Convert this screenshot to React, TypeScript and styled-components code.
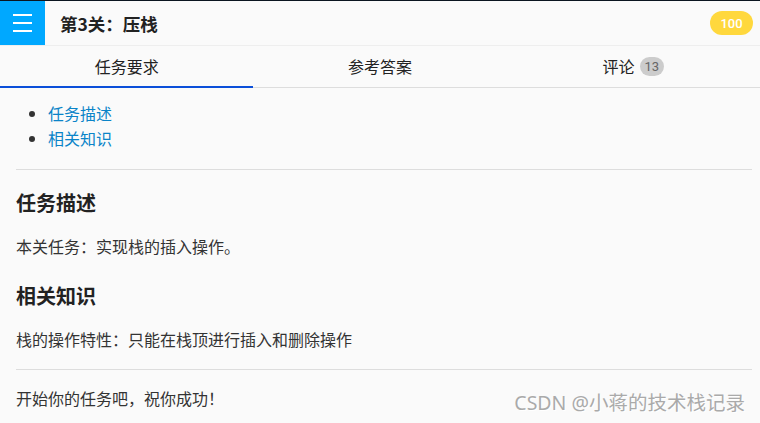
import React from 'react';
import styled, { createGlobalStyle } from 'styled-components';

const GlobalStyle = createGlobalStyle`
  html, body {
    margin: 0;
    padding: 0;
    background: #fafafa;
  }
  body {
    font-family: "Noto Sans", "Noto Sans CJK SC", sans-serif;
    color: #333;
  }
`;

const Page = styled.div`
  position: relative;
  width: 760px;
  height: 423px;
  overflow: hidden;
  background: #fafafa;
  border-top: 1px solid #0b1520;
  box-sizing: border-box;
`;

const TopBar = styled.header`
  display: flex;
  align-items: center;
  height: 44px;
  background: #fafafa;
  border-bottom: 1px solid #eeeeee;
`;

const MenuButton = styled.button`
  width: 45px;
  height: 44px;
  border: none;
  padding: 0;
  background: #00a8ff;
  display: flex;
  flex-direction: column;
  justify-content: center;
  align-items: center;
  gap: 6px;
`;

const MenuLine = styled.span`
  display: block;
  width: 19px;
  height: 2px;
  background: #fff;
`;

const Title = styled.h1`
  flex: 1;
  margin: 0 0 0 15px;
  font-size: 17.5px;
  font-weight: 700;
  color: #222;
  font-family: "Noto Sans CJK SC", sans-serif;
`;

const Score = styled.span`
  margin-right: 7px;
  min-width: 43px;
  height: 24px;
  padding: 0 2px;
  box-sizing: border-box;
  border-radius: 12px;
  background: #ffd83d;
  color: #fff;
  font-family: "Roboto", sans-serif;
  font-size: 13px;
  font-weight: 500;
  display: flex;
  align-items: center;
  justify-content: center;
`;

const Tabs = styled.nav`
  display: grid;
  grid-template-columns: repeat(3, 1fr);
  height: 41px;
  border-bottom: 1px solid #dddddd;
`;

const Tab = styled.div<{ $active?: boolean }>`
  display: flex;
  align-items: center;
  justify-content: center;
  gap: 5px;
  font-size: 16px;
  color: #222;
  font-family: "Noto Sans CJK SC", sans-serif;
  border-bottom: 2px solid ${p => (p.$active ? '#0b4fd9' : 'transparent')};
  margin-bottom: -1px;
`;

const Count = styled.span`
  display: inline-flex;
  align-items: center;
  justify-content: center;
  height: 19px;
  padding: 0 5px;
  border-radius: 10px;
  background: #cccccc;
  color: #666;
  font-size: 13px;
  font-family: "Roboto", sans-serif;
`;

const Content = styled.main`
  padding: 0 8px 0 16px;
  font-family: "Noto Sans CJK SC", sans-serif;
  font-size: 16px;
  color: #333;
`;

const Toc = styled.ul`
  margin: 13px 0 0;
  padding-left: 32px;
  line-height: 25px;
`;

const TocLink = styled.a`
  color: #0a84c8;
  text-decoration: none;
`;

const Rule = styled.hr<{ $top: number }>`
  border: none;
  border-top: 1px solid #dddddd;
  margin: ${p => p.$top}px 0 0;
`;

const Heading = styled.h3`
  margin: 0;
  font-size: 20px;
  font-weight: 700;
  color: #222;
  line-height: 26px;
`;

const Para = styled.p`
  margin: 0;
  line-height: 22px;
`;

const Section = styled.section<{ $top: number }>`
  padding-top: ${p => p.$top}px;
  display: flex;
  flex-direction: column;
  gap: 19px;
`;

const Watermark = styled.div`
  position: absolute;
  right: 15px;
  bottom: 7px;
  font-size: 19.5px;
  color: #aaa;
  font-family: "Noto Sans", "Noto Sans CJK SC", sans-serif;
  text-shadow: 1px 1px 0 #fff;
`;

const App: React.FC = () => (
  <>
    <GlobalStyle />
    <Page>
      <TopBar>
        <MenuButton aria-label="menu">
          <MenuLine />
          <MenuLine />
          <MenuLine />
        </MenuButton>
        <Title>第3关：压栈</Title>
        <Score>100</Score>
      </TopBar>
      <Tabs>
        <Tab $active>任务要求</Tab>
        <Tab>参考答案</Tab>
        <Tab>
          评论<Count>13</Count>
        </Tab>
      </Tabs>
      <Content>
        <Toc>
          <li><TocLink href="#d">任务描述</TocLink></li>
          <li><TocLink href="#k">相关知识</TocLink></li>
        </Toc>
        <Rule $top={18} />
        <Section $top={20}>
          <Heading>任务描述</Heading>
          <Para>本关任务：实现栈的插入操作。</Para>
        </Section>
        <Section $top={26}>
          <Heading>相关知识</Heading>
          <Para>栈的操作特性：只能在栈顶进行插入和删除操作</Para>
        </Section>
        <Rule $top={19} />
        <Section $top={17}>
          <Para>开始你的任务吧，祝你成功！</Para>
        </Section>
      </Content>
      <Watermark>CSDN @小蒋的技术栈记录</Watermark>
    </Page>
  </>
);

export default App;
